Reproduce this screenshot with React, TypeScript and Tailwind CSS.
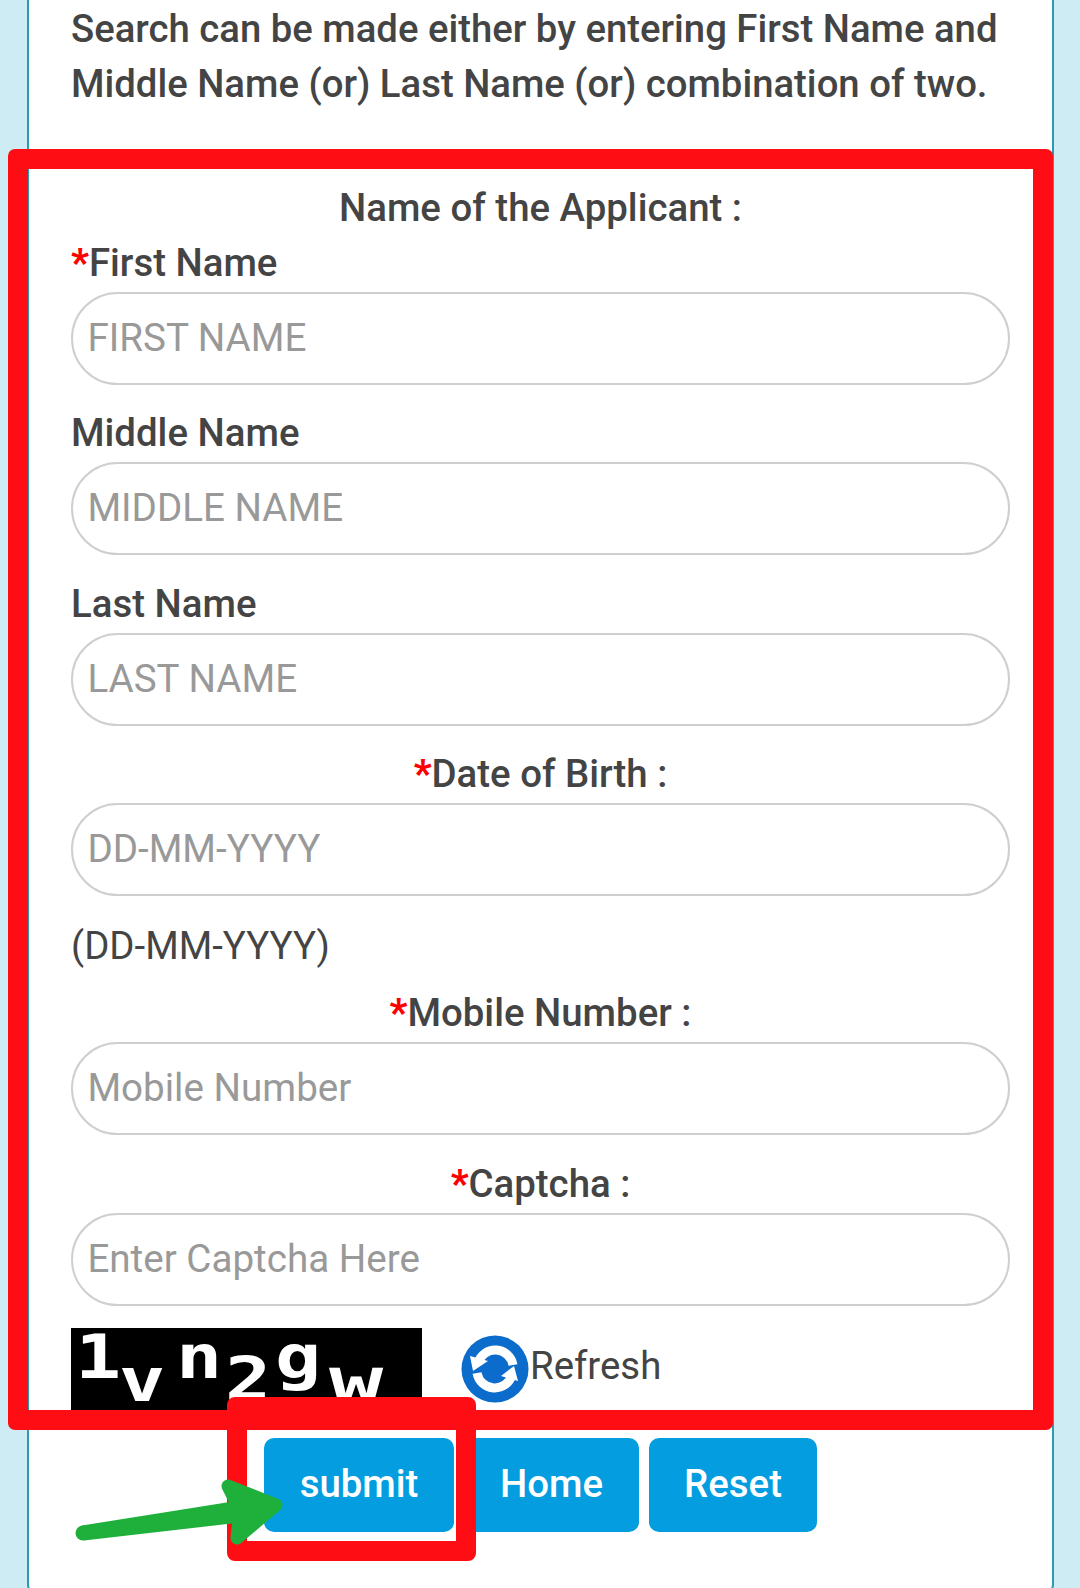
const inputClass =
  "block h-[93px] w-full rounded-[47px] border-2 border-[#cfcfcf] bg-white px-[14.4px] pb-[2px] text-[38.6px] text-[#444] outline-none placeholder:text-[#999]"

const buttonClass = "h-[94px] rounded-[10px] bg-[#049ddf] pb-[2px] text-[38.4px] font-medium text-white"

function Req() {
  return <span className="font-black text-[#f00]">*</span>
}

function Label({ children, center }: { children: React.ReactNode; center?: boolean }) {
  return (
    <div className={`h-[56px] text-[38.4px] leading-[53px] font-medium ${center ? "text-center" : ""}`}>
      {children}
    </div>
  )
}

function Captcha() {
  const chars = [
    { c: "1", x: 4, y: 50, sx: 1.28 },
    { c: "v", x: 48, y: 73, sx: 1.28 },
    { c: "n", x: 105, y: 50, sx: 1.28 },
    { c: "2", x: 154, y: 72, sx: 1.28 },
    { c: "g", x: 204, y: 50, sx: 1.28 },
    { c: "w", x: 258, y: 73, sx: 1.5 },
  ]
  return (
    <svg width="351" height="84" viewBox="0 0 351 84" className="block bg-black">
      {chars.map((ch) => (
        <text
          key={ch.c}
          transform={`translate(${ch.x} ${ch.y}) scale(${ch.sx} 1)`}
          fill="#fff"
          fontSize="60"
          fontWeight="700"
          fontFamily="'DejaVu Sans Mono', monospace"
        >
          {ch.c}
        </text>
      ))}
    </svg>
  )
}

function RefreshIcon() {
  return (
    <svg width="68" height="68" viewBox="0 0 68 68" className="block shrink-0">
      <circle cx="34" cy="34" r="33.5" fill="#0b6ccb" />
      <g fill="none" stroke="#fff" strokeWidth="9">
        <path d="M17 28 A18 18 0 0 1 52 30" />
        <path d="M51 40 A18 18 0 0 1 16 38" />
      </g>
      <path d="M9 21 L27 26 L12 36 Z" fill="#fff" />
      <path d="M57 46 L40 41 L53 31 Z" fill="#fff" />
    </svg>
  )
}

export default function App() {
  return (
    <div className="relative h-[1588px] w-[1080px] overflow-hidden bg-[#cdecf4] font-['Roboto',sans-serif] text-[#444]">
      <div className="ml-[27px] h-[1598px] w-[1027px] rounded-b-[14px] border-2 border-t-0 border-[#2a9bb0] bg-white px-[42px] pt-[1px]">
        <p className="mb-[70px] text-[38.3px] leading-[55px] font-medium whitespace-nowrap">
          Search can be made either by entering First Name and
          <br />
          Middle Name (or) Last Name (or) combination of two.
        </p>

        <div className="h-[55px] text-center text-[38.4px] leading-[53px] font-medium">Name of the Applicant :</div>
        <Label>
          <Req />First Name
        </Label>
        <input className={inputClass} placeholder="FIRST NAME" />

        <div className="mt-[21px]">
          <Label>Middle Name</Label>
        </div>
        <input className={inputClass} placeholder="MIDDLE NAME" />

        <div className="mt-[22px]">
          <Label>Last Name</Label>
        </div>
        <input className={inputClass} placeholder="LAST NAME" />

        <div className="mt-[21px]">
          <Label center>
            <Req />Date of Birth :
          </Label>
        </div>
        <input className={inputClass} placeholder="DD-MM-YYYY" />

        <div className="mt-[22px] mb-[13px] h-[55px] text-[38.4px] leading-[55px]">(DD-MM-YYYY)</div>

        <Label center>
          <Req />Mobile Number :
        </Label>
        <input className={inputClass} placeholder="Mobile Number" />

        <div className="mt-[22px]">
          <Label center>
            <Req />Captcha :
          </Label>
        </div>
        <input className={inputClass} placeholder="Enter Captcha Here" />

        <div className="mt-[22px] flex h-[84px] items-start">
          <Captcha />
          <div className="mt-[7px] ml-[39px] flex items-center">
            <RefreshIcon />
            <span className="mb-[8px] ml-[1px] text-[38.4px] leading-[55px]">Refresh</span>
          </div>
        </div>

        <div className="mt-[26px] flex justify-center gap-[10px]">
          <button className={`${buttonClass} w-[190px]`}>submit</button>
          <button className={`${buttonClass} w-[175px]`}>Home</button>
          <button className={`${buttonClass} w-[168px]`}>Reset</button>
        </div>
      </div>

      {/* annotations drawn over the screenshot */}
      <div className="absolute top-[149px] left-[8px] h-[1281px] w-[1045px] rounded-[7px] border-[20px] border-[#ff0d14]" />
      <div className="absolute top-[1397px] left-[227px] h-[164px] w-[249px] rounded-[8px] border-[20px] border-t-[32px] border-[#ff0d14]" />
      <svg className="absolute top-0 left-0" width="1080" height="1588" viewBox="0 0 1080 1588">
        <circle cx="83" cy="1533" r="7.5" fill="#1fb03c" />
        <path d="M82 1525.5 L236 1501 L236 1523 L84 1540.5 Z" fill="#1fb03c" />
        <path d="M228 1486 L276 1505 L237 1538 L240 1510 Z" fill="#1fb03c" stroke="#1fb03c" strokeWidth="13" strokeLinejoin="round" />
      </svg>
    </div>
  )
}
